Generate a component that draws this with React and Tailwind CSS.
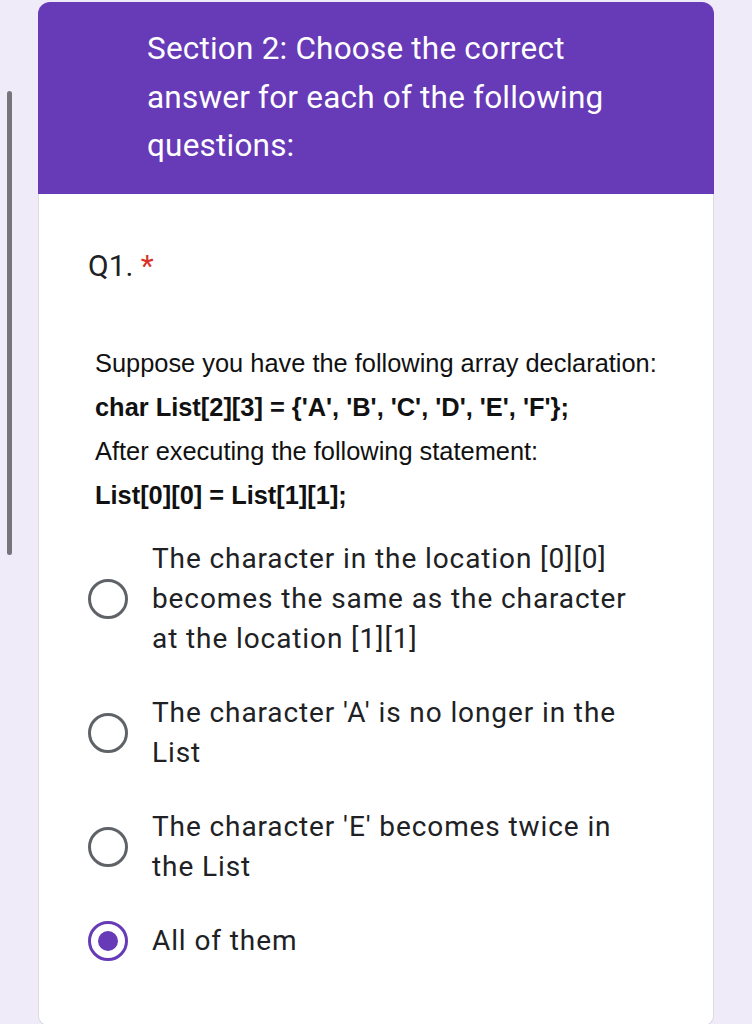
import React from "react";

const options = [
  {
    lines: ["The character in the location [0][0]", "becomes the same as the character", "at the location [1][1]"],
    checked: false,
  },
  { lines: ["The character 'A' is no longer in the", "List"], checked: false },
  { lines: ["The character 'E' becomes twice in", "the List"], checked: false },
  { lines: ["All of them"], checked: true },
];

function Radio({ checked }) {
  if (checked) {
    return (
      <span className="flex h-[40px] w-[40px] shrink-0 items-center justify-center rounded-full border-[3.5px] border-[#673ab7]">
        <span className="h-[20px] w-[20px] rounded-full bg-[#673ab7]" />
      </span>
    );
  }
  return <span className="h-[40px] w-[40px] shrink-0 rounded-full border-[3.5px] border-[#5f6368]" />;
}

export default function App() {
  return (
    <div className="relative min-h-[1024px] overflow-hidden bg-[#efebf8] font-['Roboto',sans-serif]">
      {/* scrollbar */}
      <div className="absolute left-[7px] top-[91px] h-[464px] w-[5px] rounded-full bg-[#77747c]" />

      <div className="ml-[38px] mr-[38px] pt-[2px]">
        {/* Section header */}
        <div className="rounded-t-[12px] bg-[#673ab7] pb-[23px] pl-[109px] pr-[30px] pt-[23px]">
          <h1 className="text-[31.5px] leading-[48.5px] tracking-[0.2px] text-white">
            Section 2: Choose the correct
            <br />
            answer for each of the following
            <br />
            questions:
          </h1>
        </div>

        {/* Question card */}
        <div className="h-[832px] rounded-b-[10px] border-x border-b border-[#dadce0] bg-white pl-[49px] pr-[20px] pt-[52px]">
          <div className="text-[30px] leading-[40px] text-[#202124]">
            Q1. <span className="text-[#d93025]">*</span>
          </div>

          <div className="mt-[55px] pl-[7px] font-['Liberation_Sans',Arial,sans-serif] text-[25.4px] leading-[44px] text-[#111]">
            <p>Suppose you have the following array declaration:</p>
            <p className="font-bold">char List[2][3] = {"{'A', 'B', 'C', 'D', 'E', 'F'};"}</p>
            <p>After executing the following statement:</p>
            <p className="font-bold">List[0][0] = List[1][1];</p>
          </div>

          <div className="mt-[22px] flex flex-col gap-[34px]">
            {options.map((opt, i) => (
              <label key={i} className="flex items-center gap-[24px]">
                <Radio checked={opt.checked} />
                <span className="whitespace-nowrap text-[28px] leading-[40px] tracking-[0.9px] text-[#202124]">
                  {opt.lines.map((l, j) => (
                    <span key={j} className="block">
                      {l}
                    </span>
                  ))}
                </span>
              </label>
            ))}
          </div>
        </div>
      </div>
    </div>
  );
}
